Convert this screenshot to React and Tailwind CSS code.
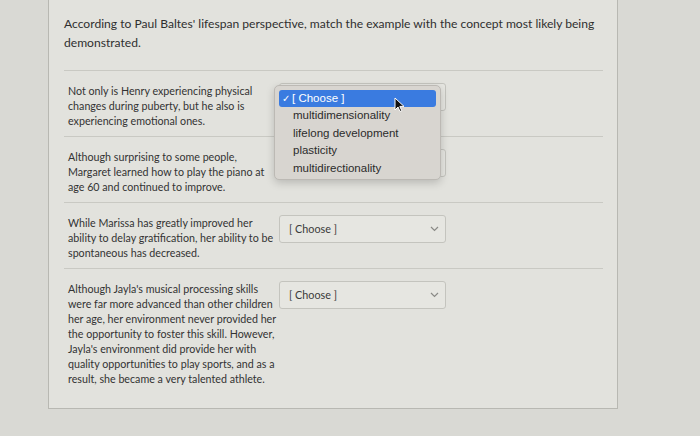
const rows = [
  {
    text: "Not only is Henry experiencing physical changes during puberty, but he also is experiencing emotional ones.",
    open: true,
    covered: true,
  },
  {
    text: "Although surprising to some people, Margaret learned how to play the piano at age 60 and continued to improve.",
    covered: true,
  },
  {
    text: "While Marissa has greatly improved her ability to delay gratification, her ability to be spontaneous has decreased.",
  },
  {
    text: "Although Jayla's musical processing skills were far more advanced than other children her age, her environment never provided her the opportunity to foster this skill. However, Jayla's environment did provide her with quality opportunities to play sports, and as a result, she became a very talented athlete.",
  },
];

const options = ["multidimensionality", "lifelong development", "plasticity", "multidirectionality"];

function Chevron() {
  return (
    <svg width="9" height="6" viewBox="0 0 9 6" className="text-[#8a8a86]">
      <path d="M1 1l3.5 3.5L8 1" fill="none" stroke="currentColor" strokeWidth="1.2" />
    </svg>
  );
}

function Cursor() {
  return (
    <svg width="11" height="16" viewBox="0 0 11 16" className="absolute left-[115px] top-[7px]">
      <path d="M1 1v12l3-3 2 4.5 1.8-.8-2-4.3H10z" fill="#111" stroke="#fff" strokeWidth="1" strokeLinejoin="round" />
    </svg>
  );
}

function Menu() {
  return (
    <div className="absolute left-[-5px] top-[2px] z-10 w-[167px] h-[95px] rounded-[5px] border border-[#bcb9b4] bg-[#d8d5d0] p-[4px] shadow-[0_3px_8px_rgba(0,0,0,0.18)] font-['Liberation_Sans',sans-serif] text-[11.5px] text-[#2b2b2b]">
      <div className="relative flex h-[17px] items-center rounded-[3px] bg-[#3a7be0] pl-[3px] text-white">
        <span className="w-[10px] text-[10px]">✓</span>
        <span>[ Choose ]</span>
        <Cursor />
      </div>
      {options.map((o) => (
        <div key={o} className="flex h-[17.5px] items-center pl-[14px]">
          {o}
        </div>
      ))}
    </div>
  );
}

export default function App() {
  return (
    <div className="flex h-[436px] w-[700px] bg-[#d9d9d4] font-['Lato',sans-serif] text-[#333]">
      <div className="ml-[48px] h-[409px] w-[570px] border-x border-b border-[#b8b8b2] bg-[#e2e2dd] pl-[15px] pr-[14px] pt-[14px]">
        <p className="text-[12.1px] leading-[19px] text-[#2f2f2f]">
          According to Paul Baltes' lifespan perspective, match the example with the concept most likely being demonstrated.
        </p>
        <div className="mt-[18px] h-px bg-[#c9c9c3]" />
        {rows.map((r, i) => (
          <div key={i}>
            <div className="flex pb-[8px] pl-[4px] pt-[12px]">
              <p className="w-[210px] text-[10.7px] leading-[15px] text-[#333]">{r.text}</p>
              <div className="relative ml-[1px] h-[28px] w-[167px]">
                <div className="flex h-full items-center justify-between rounded-[3px] border border-[#c4c4be] bg-[#e6e6e1] pl-[9px] pr-[6px] text-[10.8px] text-[#3a3a3a]">
                  <span className={r.covered ? "invisible" : ""}>[ Choose ]</span>
                  <Chevron />
                </div>
                {r.open && <Menu />}
              </div>
            </div>
            {i < rows.length - 1 && <div className="h-px bg-[#c9c9c3]" />}
          </div>
        ))}
      </div>
    </div>
  );
}
